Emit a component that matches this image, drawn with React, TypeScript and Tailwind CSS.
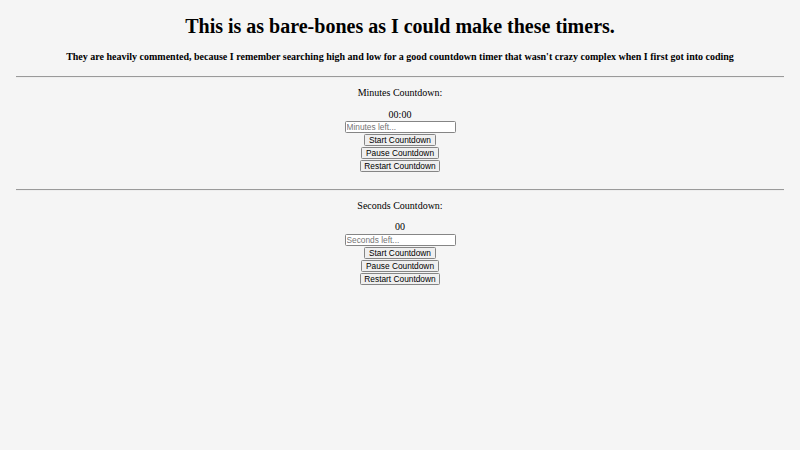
import React from "react";

function Section({ label, value, placeholder, mt }: { label: string; value: string; placeholder: string; mt: string }) {
  return (
    <div className={mt}>
      <div className="h-0 border-t border-b border-t-[#9a9a9a] border-b-[#eeeeee]" />
      <div className="flex flex-col items-center">
        <p className="mt-[9.3px] text-[10px] leading-[12px]">{label}</p>
        <p className="mt-[9.3px] text-[10px] leading-[12px]">{value}</p>
        <input
          type="text"
          placeholder={placeholder}
          className="mt-[0.4px] box-border h-[12.5px] w-[111px] rounded-[1.5px] border border-[#858585] bg-white px-[1px] font-['Liberation_Sans',Arial,sans-serif] text-[8.33px] leading-[10px] text-black placeholder:text-[#757575] outline-none"
        />
        <div className="mt-[0.5px] flex flex-col items-center gap-[0.5px]">
          {["Start Countdown", "Pause Countdown", "Restart Countdown"].map((t) => (
            <button
              key={t}
              className="box-border h-[12.5px] rounded-[1.5px] border border-[#858585] bg-[#efefef] px-[3.75px] font-['Liberation_Sans',Arial,sans-serif] text-[8.33px] leading-[10px] text-black"
            >
              {t}
            </button>
          ))}
        </div>
      </div>
    </div>
  );
}

export default function App() {
  return (
    <div className="min-h-[450px] w-full bg-[#f5f5f5] px-4 pt-[15px] text-center font-['Liberation_Serif','Times_New_Roman',serif] text-black">
      <h1 className="text-[20px] font-bold leading-[23px]">This is as bare-bones as I could make these timers.</h1>
      <h3 className="mt-[13.3px] whitespace-nowrap text-[10px] font-bold leading-[12px]">
        They are heavily commented, because I remember searching high and low for a good countdown timer that wasn't crazy complex when I first got into coding
      </h3>
      <Section label="Minutes Countdown:" value="00:00" placeholder="Minutes left..." mt="mt-[12.7px]" />
      <Section label="Seconds Countdown:" value="00" placeholder="Seconds left..." mt="mt-[16.3px]" />
    </div>
  );
}
